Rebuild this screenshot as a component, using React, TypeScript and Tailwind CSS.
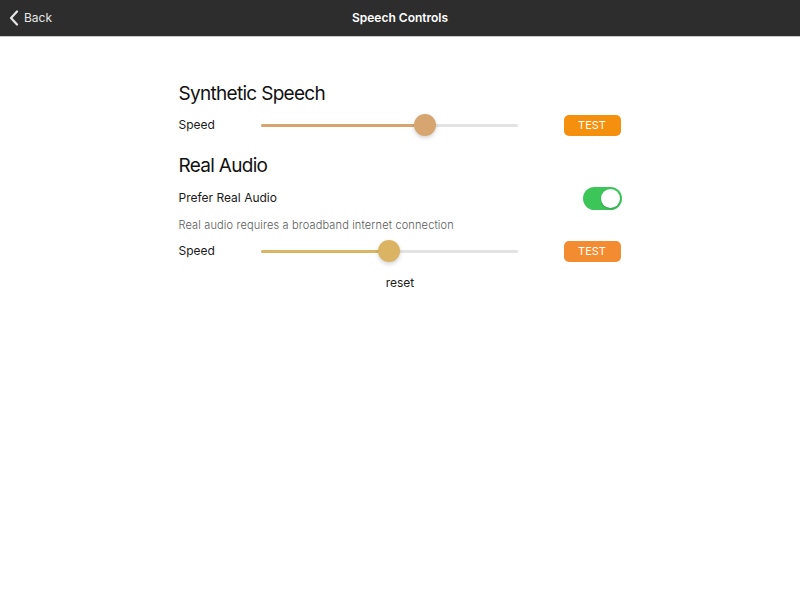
import React, { useState } from 'react';

const Slider = ({ value, fill }: { value: number; fill: string }) => {
  return (
    <div className="relative w-[257px] h-[22px] flex items-center">
      <div className="w-full h-[3px] rounded-full bg-[#e3e3e3]" />
      <div
        className="absolute left-0 h-[3px] rounded-full"
        style={{ width: `${value * 100}%`, backgroundColor: fill }}
      />
      <div
        className="absolute w-[22px] h-[22px] rounded-full shadow-[0_2px_4px_rgba(0,0,0,0.18)]"
        style={{ left: `calc(${value * 100}% - 11px)`, backgroundColor: fill }}
      />
    </div>
  );
};

const TestButton = ({ color }: { color: string }) => (
  <button
    className="w-[57px] h-[21px] rounded-[5px] text-white text-[11px] flex items-center justify-center"
    style={{ backgroundColor: color }}
  >
    TEST
  </button>
);

const SpeedRow = ({ value, fill, btn }: { value: number; fill: string; btn: string }) => (
  <div className="flex items-center h-[22px]">
    <div className="w-[82px] text-[12px] text-[#1a1a1a]">Speed</div>
    <Slider value={value} fill={fill} />
    <div className="ml-[46px]">
      <TestButton color={btn} />
    </div>
  </div>
);

export default function App() {
  const [preferReal, setPreferReal] = useState(true);

  return (
    <div className="w-[800px] h-[600px] bg-white font-['Inter',sans-serif] flex flex-col">
      <div className="h-[37px] bg-[#2d2d2d] border-b border-[#c8c8c8] flex items-center relative shrink-0">
        <div className="flex items-center gap-[5px] pl-[9px] text-[#e6e6e6]">
          <svg width="10" height="16" viewBox="0 0 10 16" fill="none">
            <path d="M8 1.5L2 8l6 6.5" stroke="#e6e6e6" strokeWidth="2.2" strokeLinecap="round" strokeLinejoin="round" />
          </svg>
          <span className="text-[12px]">Back</span>
        </div>
        <div className="absolute left-0 right-0 text-center text-[12px] font-semibold text-white pointer-events-none">
          Speech Controls
        </div>
      </div>

      <div className="w-[443px] mx-auto pt-[43px] flex flex-col">
        <div className="h-[28px] flex items-center text-[19px] tracking-[-0.7px] text-[#111]">Synthetic Speech</div>
        <div className="mt-[6px]">
          <SpeedRow value={0.64} fill="#d6a570" btn="#f5900f" />
        </div>

        <div className="mt-[16px] h-[28px] flex items-center text-[19px] tracking-[-0.7px] text-[#111]">Real Audio</div>
        <div className="mt-[6px] h-[24px] flex items-center justify-between">
          <span className="text-[12px] text-[#1a1a1a]">Prefer Real Audio</span>
          <button
            onClick={() => setPreferReal(!preferReal)}
            className={`w-[39px] h-[23px] rounded-full p-[2px] flex items-center ${preferReal ? 'bg-[#3cc65a] justify-end' : 'bg-[#e5e5e5] justify-start'}`}
          >
            <div className="w-[19px] h-[19px] rounded-full bg-white shadow-[0_1px_2px_rgba(0,0,0,0.2)]" />
          </button>
        </div>
        <div className="mt-[7px] h-[16px] flex items-center text-[11px] font-light text-[#5a5a5a] tracking-[0.15px]">
          Real audio requires a broadband internet connection
        </div>
        <div className="mt-[7px]">
          <SpeedRow value={0.5} fill="#dbb463" btn="#f38b30" />
        </div>
        <div className="mt-[12px] h-[18px] flex items-center justify-center text-[12px] text-[#1a1a1a]">
          reset
        </div>
      </div>
    </div>
  );
}
